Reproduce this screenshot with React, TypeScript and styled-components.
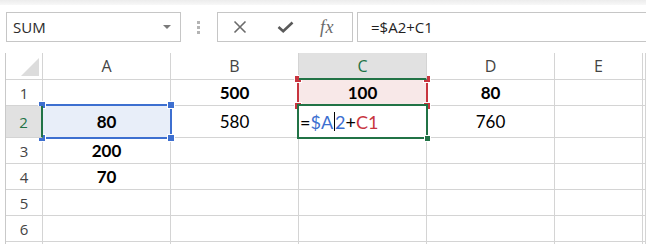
import React from "react";
import styled, { createGlobalStyle, css } from "styled-components";

const GlobalStyle = createGlobalStyle`
  html, body {
    margin: 0;
    padding: 0;
    background: #ffffff;
    overflow: hidden;
  }
  body {
    font-family: "Open Sans", "Noto Sans", sans-serif;
  }
`;

const gridLine = "#d4d4d4";
const green = "#217346";
const blue = "#3d6fd0";
const red = "#c8353f";

const Window = styled.div`
  width: 646px;
  height: 244px;
  background: #fff;
  overflow: hidden;
`;

const TopStrip = styled.div`
  height: 5px;
  background: linear-gradient(#ececec, #f8f8f8);
`;

const Toolbar = styled.div`
  display: flex;
  align-items: center;
  height: 30px;
  margin-top: 7px;
  padding-left: 6px;
`;

const NameBox = styled.div`
  box-sizing: border-box;
  width: 175px;
  height: 30px;
  border: 1px solid #c6c6c6;
  display: flex;
  align-items: center;
  justify-content: space-between;
  padding: 0 9px 0 6px;
  font-size: 15px;
  color: #2b2b2b;
`;

const Caret = styled.span`
  width: 0;
  height: 0;
  border-left: 4px solid transparent;
  border-right: 4px solid transparent;
  border-top: 4px solid #7a7a7a;
`;

const Grip = styled.div`
  display: flex;
  flex-direction: column;
  gap: 2px;
  margin: 0 17px 0 16px;
`;

const GripDot = styled.span`
  width: 3px;
  height: 3px;
  background: #b4b4b4;
`;

const ButtonGroup = styled.div`
  box-sizing: border-box;
  width: 136px;
  height: 30px;
  border: 1px solid #c6c6c6;
  display: flex;
  align-items: center;
  padding-left: 15px;
  gap: 30px;
`;

const IconButton = styled.span`
  display: flex;
  align-items: center;
  justify-content: center;
  color: #666;
`;

const Fx = styled.span`
  font-family: "Liberation Serif", "DejaVu Serif", serif;
  font-style: italic;
  font-size: 18px;
  color: #6a6a6a;
  margin-left: -4px;
  letter-spacing: 0.5px;
`;

const FormulaInput = styled.div`
  box-sizing: border-box;
  flex: 1;
  height: 30px;
  margin-left: 4px;
  border: 1px solid #c6c6c6;
  border-right: none;
  display: flex;
  align-items: center;
  padding-left: 13px;
  font-size: 15px;
  color: #1f1f1f;
`;

const Sheet = styled.div`
  margin-top: 11px;
  margin-left: 5px;
  border-left: 1px solid #c9c9c9;
  display: grid;
  grid-template-columns: 37px 128px 128px 128px 128px 88px 1fr;
  grid-template-rows: 27px 26px 32px 26px 26px 26px 26px 26px;
`;

const HeaderCell = styled.div<{ $selected?: boolean; $row?: boolean }>`
  box-sizing: border-box;
  position: relative;
  display: flex;
  align-items: center;
  justify-content: center;
  border-right: 1px solid ${gridLine};
  border-bottom: 1px solid ${gridLine};
  font-family: "Open Sans", "Noto Sans", sans-serif;
  font-size: ${(p) => (p.$row ? "15px" : "16px")};
  color: #444;
  background: #fff;
  ${(p) =>
    p.$selected &&
    css`
      background: #e1e1e1;
      color: ${green};
      z-index: 3;
    `}
  ${(p) =>
    p.$selected &&
    !p.$row &&
    css`
      border-bottom: 2px solid ${green};
    `}
  ${(p) =>
    p.$selected &&
    p.$row &&
    css`
      border-right: 2px solid ${green};
    `}
`;

const Corner = styled(HeaderCell)`
  align-items: flex-end;
  justify-content: flex-end;
  padding: 0 3px 3px 0;
`;

type Mark = "blue" | "red" | "active" | undefined;

const markColor = (m: Mark) => (m === "blue" ? blue : m === "red" ? red : green);
const markFill = (m: Mark) =>
  m === "blue" ? "#e8eef9" : m === "red" ? "#f8e8e8" : "#fff";

const Cell = styled.div<{ $bold?: boolean; $mark?: Mark; $left?: boolean }>`
  box-sizing: border-box;
  position: relative;
  display: flex;
  align-items: center;
  justify-content: ${(p) => (p.$left ? "flex-start" : "center")};
  padding-left: ${(p) => (p.$left ? "1px" : "0")};
  border-right: 1px solid ${gridLine};
  border-bottom: 1px solid ${gridLine};
  font-family: Lato, "Open Sans", sans-serif;
  font-size: ${(p) => (p.$left ? "18px" : "17px")};
  font-weight: ${(p) => (p.$bold ? 700 : 400)};
  color: #000;
  background: ${(p) => markFill(p.$mark)};
  z-index: ${(p) => (p.$mark === "active" ? 2 : p.$mark ? 1 : 0)};
`;

const Frame = styled.span<{ $mark: Mark }>`
  position: absolute;
  top: -2px;
  left: -2px;
  right: -2px;
  bottom: -2px;
  border: 2px solid ${(p) => markColor(p.$mark)};
  pointer-events: none;
`;

const Handle = styled.span<{ $mark: Mark; $pos: "tl" | "tr" | "bl" | "br"; $size?: number }>`
  position: absolute;
  width: ${(p) => p.$size ?? 6}px;
  height: ${(p) => p.$size ?? 6}px;
  background: ${(p) => markColor(p.$mark)};
  border: 1px solid #fff;
  box-sizing: content-box;
  ${(p) => (p.$pos[0] === "t" ? "top: -5px;" : "bottom: -5px;")}
  ${(p) => (p.$pos[1] === "l" ? "left: -5px;" : "right: -5px;")}
`;

const Ref = styled.span<{ $color: string }>`
  color: ${(p) => p.$color};
`;

const Cursor = styled.span`
  display: inline-block;
  width: 1px;
  height: 19px;
  background: #000;
  vertical-align: middle;
  margin: 0 0 0 1px;
`;

const XIcon = () => (
  <svg width="14" height="14" viewBox="0 0 14 14">
    <path d="M1.5 1.5 L12.5 12.5 M12.5 1.5 L1.5 12.5" stroke="#6b6b6b" strokeWidth="1.6" fill="none" />
  </svg>
);

const CheckIcon = () => (
  <svg width="17" height="12" viewBox="0 0 17 12">
    <path d="M1.5 6 L6.2 10.2 L15.5 1.5" stroke="#5a5a5a" strokeWidth="2.6" fill="none" />
  </svg>
);

const CornerTriangle = () => (
  <svg width="18" height="18" viewBox="0 0 18 18">
    <polygon points="18,0 18,18 0,18" fill="#dcdcdc" />
  </svg>
);

const Marked: React.FC<{ mark: Mark; bold?: boolean; left?: boolean; children?: React.ReactNode }> = ({
  mark,
  bold,
  left,
  children,
}) => (
  <Cell $mark={mark} $bold={bold} $left={left}>
    {children}
    <Frame $mark={mark} />
    {mark === "active" ? (
      <Handle $mark={mark} $pos="br" $size={5} />
    ) : (
      <>
        <Handle $mark={mark} $pos="tl" />
        <Handle $mark={mark} $pos="tr" />
        <Handle $mark={mark} $pos="bl" />
        <Handle $mark={mark} $pos="br" />
      </>
    )}
  </Cell>
);

const columns = ["A", "B", "C", "D", "E", ""];

const data: Record<string, { v: string; b?: boolean }> = {
  B1: { v: "500", b: true },
  D1: { v: "80", b: true },
  B2: { v: "580" },
  D2: { v: "760" },
  A3: { v: "200", b: true },
  A4: { v: "70", b: true },
};

const App: React.FC = () => {
  // the 7th row only shows its top edge at the bottom of the window
  const rows = [1, 2, 3, 4, 5, 6, 7];

  const renderCell = (col: string, row: number) => {
    const key = `${col}${row}`;
    if (key === "A2")
      return (
        <Marked key={key} mark="blue" bold>
          80
        </Marked>
      );
    if (key === "C1")
      return (
        <Marked key={key} mark="red" bold>
          100
        </Marked>
      );
    if (key === "C2")
      return (
        <Marked key={key} mark="active" left>
          =<Ref $color={blue}>$A</Ref>
          <Cursor />
          <Ref $color={blue}>2</Ref>+<Ref $color={red}>C1</Ref>
        </Marked>
      );
    const d = data[key];
    return (
      <Cell key={key} $bold={d?.b}>
        {d?.v}
      </Cell>
    );
  };

  return (
    <Window>
      <GlobalStyle />
      <TopStrip />
      <Toolbar>
        <NameBox>
          SUM
          <Caret />
        </NameBox>
        <Grip>
          <GripDot />
          <GripDot />
          <GripDot />
        </Grip>
        <ButtonGroup>
          <IconButton>
            <XIcon />
          </IconButton>
          <IconButton>
            <CheckIcon />
          </IconButton>
          <Fx>fx</Fx>
        </ButtonGroup>
        <FormulaInput>=$A2+C1</FormulaInput>
      </Toolbar>
      <Sheet>
        <Corner>
          <CornerTriangle />
        </Corner>
        {columns.map((c, i) => (
          <HeaderCell key={`h${i}`} $selected={c === "C"}>
            {c}
          </HeaderCell>
        ))}
        {rows.map((r) => (
          <React.Fragment key={r}>
            <HeaderCell $row $selected={r === 2}>
              {r < 7 ? r : ""}
            </HeaderCell>
            {columns.map((c, i) => (c ? renderCell(c, r) : <Cell key={`x${i}${r}`} />))}
          </React.Fragment>
        ))}
      </Sheet>
    </Window>
  );
};

export default App;
